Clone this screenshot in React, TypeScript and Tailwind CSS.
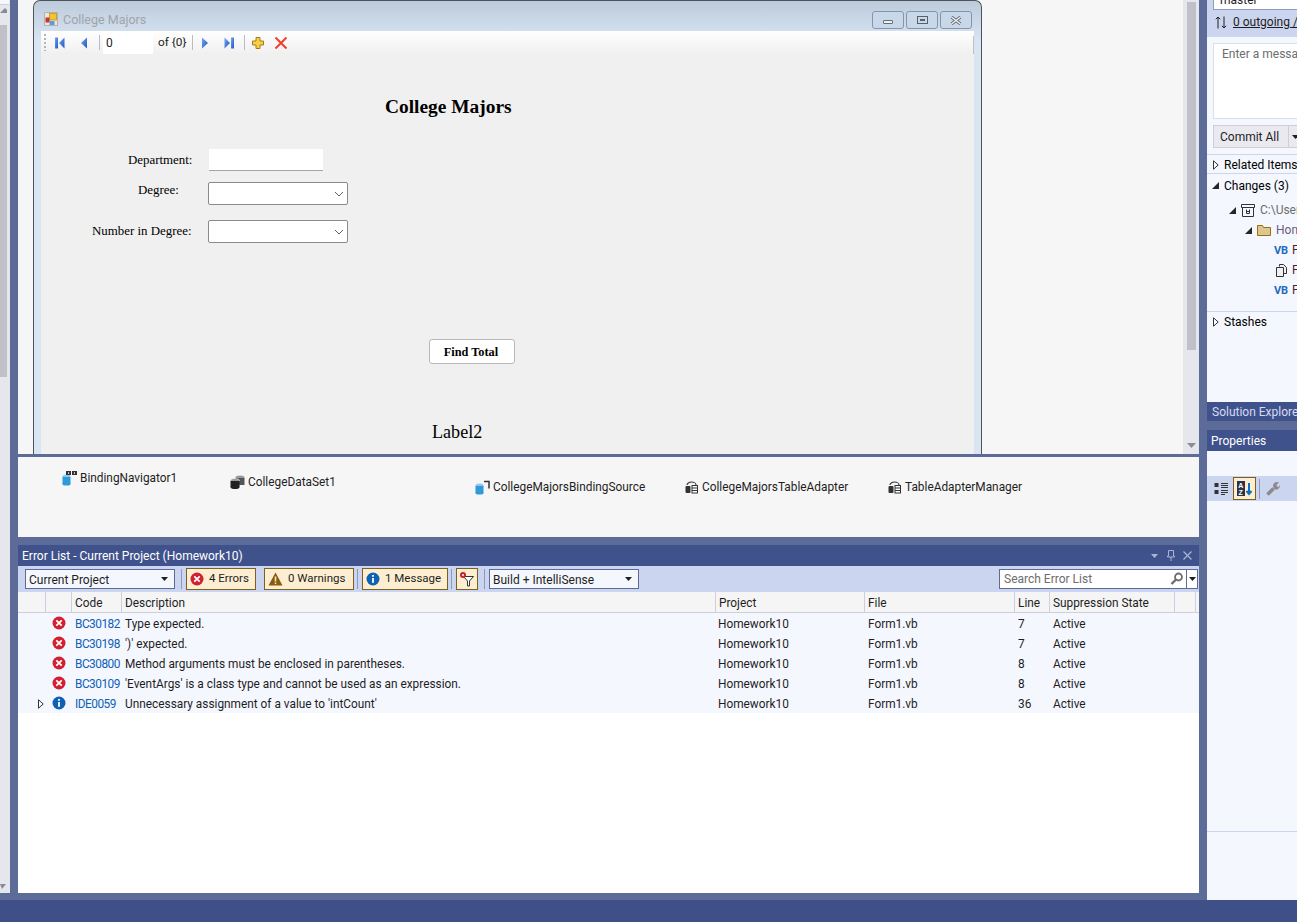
import React from "react";

const SANS = "font-['Roboto',sans-serif]";

function ErrIcon({ size = 14 }: { size?: number }) {
  return (
    <svg width={size} height={size} viewBox="0 0 14 14" className="shrink-0">
      <circle cx="7" cy="7" r="6.5" fill="#d1202f" />
      <path d="M4.3 4.3l5.4 5.4M9.700 4.300l-5.400 5.400" stroke="#fff" strokeWidth="1.800" />
    </svg>
  );
}
function InfoIcon({ size = 14 }: { size?: number }) {
  return (
    <svg width={size} height={size} viewBox="0 0 14 14" className="shrink-0">
      <circle cx="7" cy="7" r="6.500" fill="#0e61b5" />
      <rect x="6.100" y="6" width="1.800" height="4.800" fill="#fff" />
      <rect x="6.100" y="3" width="1.800" height="1.800" fill="#fff" />
    </svg>
  );
}
function WarnIcon() {
  return (
    <svg width="15" height="14" viewBox="0 0 15 14" className="shrink-0">
      <path d="M7.500 0.500L14.500 13.500H0.500Z" fill="#8a5a10" />
      <rect x="6.700" y="4.500" width="1.600" height="5" fill="#f8e8b8" />
      <rect x="6.700" y="10.500" width="1.600" height="1.600" fill="#f8e8b8" />
    </svg>
  );
}
function Caret({ className = "" }: { className?: string }) {
  return (
    <svg width="7" height="4" viewBox="0 0 7 4" className={`shrink-0 ${className}`}>
      <path d="M0 0h7L3.500 4Z" fill="#1e1e1e" />
    </svg>
  );
}
function Chevron() {
  return (
    <svg width="10" height="6" viewBox="0 0 10 6">
      <path d="M1 1l4 4 4-4" stroke="#606060" strokeWidth="1" fill="none" />
    </svg>
  );
}
function TreeOpen() {
  return (
    <svg width="7" height="7" viewBox="0 0 7 7" className="shrink-0">
      <path d="M7 0v7H0Z" fill="#262626" />
    </svg>
  );
}
function TreeClosed() {
  return (
    <svg width="6" height="10" viewBox="0 0 6 10" className="shrink-0">
      <path d="M0.500 0.800L5.200 5 0.500 9.200Z" fill="#fff" stroke="#333" strokeWidth="1" />
    </svg>
  );
}

function NavTri({ dir, bar }: { dir: "l" | "r"; bar?: boolean }) {
  return (
    <svg width="12" height="12" viewBox="0 0 12 12" className="shrink-0">
      <defs>
        <linearGradient id="navg" x1="0" y1="0" x2="1" y2="1">
          <stop offset="0" stopColor="#7aa6ee" />
          <stop offset="1" stopColor="#1d55c4" />
        </linearGradient>
      </defs>
      {dir === "l" ? (
        <>
          {bar && <rect x="1" y="0.500" width="3" height="11" fill="url(#navg)" />}
          <path d={bar ? "M10.500 0.500V11.500L5 6Z" : "M9 0.500V11.500L3 6Z"} fill="url(#navg)" />
        </>
      ) : (
        <>
          {bar && <rect x="8" y="0.500" width="3" height="11" fill="url(#navg)" />}
          <path d={bar ? "M1.500 0.500V11.500L7 6Z" : "M3 0.500V11.500L9 6Z"} fill="url(#navg)" />
        </>
      )}
    </svg>
  );
}

function ToolSep() {
  return <div className="w-px h-[15px] bg-[#b9bcc0] shrink-0" />;
}

function CapBtn({ children }: { children: React.ReactNode }) {
  return (
    <div className="w-[32px] h-[18px] rounded-[3px] border border-[#8595b0] bg-[#c9d8e8] flex items-center justify-center">
      {children}
    </div>
  );
}

function FormSelect({ className }: { className: string }) {
  return (
    <div className={`absolute w-[140px] h-[23px] bg-white border border-[#8a8a8a] rounded-[2px] flex items-center justify-end pr-[3px] ${className}`}>
      <Chevron />
    </div>
  );
}

function FormWindow() {
  return (
    <div className="ml-[15px] w-[949px] h-[454px] border border-b-0 border-[#4f5258] rounded-t-[7px] bg-gradient-to-b from-[#bccbdb] to-[#d9e5f3] to-[40px] flex flex-col">
      <div className="h-[30px] shrink-0 flex items-start">
        <div className="ml-[10px] mt-[11px] flex items-center gap-[5px]">
          <svg width="14" height="14" viewBox="0 0 14 14" className="shrink-0">
            <rect x="0.500" y="0.500" width="13" height="13" fill="#e9e6df" stroke="#b4b2aa" />
            <rect x="5.500" y="1.500" width="7" height="6.500" fill="#f4c430" stroke="#b98e10" strokeWidth="0.700" />
            <rect x="1.500" y="5.500" width="4" height="5" fill="#c8352d" />
            <rect x="5.500" y="9" width="5" height="4" fill="#5f9bdc" />
          </svg>
          <span className={`${SANS} text-[12.500px] leading-none text-[#a0a4aa] mt-[2px]`}>College Majors</span>
        </div>
        <div className="ml-auto mr-[9px] mt-[10px] flex gap-[2px]">
          <CapBtn><div className="w-[10px] h-[4px] bg-[#eef1f4] border border-[#626b78] rounded-[1px] mt-[3px]" /></CapBtn>
          <CapBtn><div className="w-[11px] h-[8px] border border-[#59606c] flex items-center justify-center"><div className="w-[5px] h-[2px] bg-[#59606c]" /></div></CapBtn>
          <CapBtn>
            <svg width="12" height="9" viewBox="0 0 12 9">
              <path d="M1.500 1l9 7M10.500 1l-9 7" stroke="#5c6470" strokeWidth="3" />
              <path d="M1.500 1l9 7M10.500 1l-9 7" stroke="#eef1f4" strokeWidth="1.400" />
            </svg>
          </CapBtn>
        </div>
      </div>
      <div className="flex-1 min-h-0 ml-[7px] mr-[7px] flex flex-col bg-[#f0f0f0]">
        <div className="h-[23px] shrink-0 bg-gradient-to-b from-white to-[#f0f0f0] flex items-center pl-[3px] relative">
          <div className="w-[2px] h-[17px] mr-[8px] shrink-0 bg-[repeating-linear-gradient(to_bottom,#b5b5b5_0,#b5b5b5_2px,transparent_2px,transparent_4px)]" />
          <NavTri dir="l" bar />
          <div className="w-[12px] shrink-0" />
          <NavTri dir="l" />
          <div className="w-[9px] shrink-0" />
          <ToolSep />
          <div className="ml-[3px] w-[50px] h-[23px] shrink-0 bg-white pl-[3px] flex items-center">
            <span className={`${SANS} text-[12px] text-[#222]`}>0</span>
          </div>
          <span className={`${SANS} ml-[5px] text-[11.800px] text-[#222] w-[30px] shrink-0 whitespace-nowrap`}>of {"{0}"}</span>
          <div className="ml-[4px]"><ToolSep /></div>
          <div className="w-[6px] shrink-0" />
          <NavTri dir="r" />
          <div className="w-[12px] shrink-0" />
          <NavTri dir="r" bar />
          <div className="w-[9px] shrink-0" />
          <ToolSep />
          <svg width="14" height="14" viewBox="0 0 14 14" className="ml-[6px] shrink-0">
            <path d="M5 1.500h4V5h3.500v4H9v3.500H5V9H1.500V5H5Z" fill="#f7cf4a" stroke="#a97c10" />
          </svg>
          <svg width="14" height="14" viewBox="0 0 14 14" className="ml-[9px] shrink-0">
            <path d="M1.500 1.500l11 11M12.500 1.500l-11 11" stroke="#f0402c" strokeWidth="2" />
          </svg>
          <div className="absolute right-0 top-[5px] w-px h-[18px] bg-[#c0c0c0]" />
        </div>
        <div className="relative flex-1 font-['Liberation_Serif',serif] text-black">
          <div className="absolute left-[344px] top-[41px] text-[19.400px] leading-[24px] font-bold whitespace-nowrap">College Majors</div>
          <div className="absolute left-[87px] top-[98px] text-[12.900px] leading-[16px] whitespace-nowrap">Department:</div>
          <div className="absolute left-[168px] top-[95px] w-[114px] h-[22px] bg-white border-b border-[#a5a5a5]" />
          <div className="absolute left-[97px] top-[128px] text-[12.900px] leading-[16px] whitespace-nowrap">Degree:</div>
          <FormSelect className="left-[167px] top-[128px]" />
          <div className="absolute left-[51px] top-[169px] text-[12.900px] leading-[16px] whitespace-nowrap">Number in Degree:</div>
          <FormSelect className="left-[167px] top-[166px]" />
          <div className="absolute left-[388px] top-[285px] w-[86px] h-[25px] bg-white border border-[#b8b8b8] rounded-[3px] flex items-center justify-center text-[12.300px] font-bold pr-[2px] pt-px">Find Total</div>
          <div className="absolute left-[391px] top-[367px] text-[18.100px] leading-[22px] whitespace-nowrap">Label2</div>
        </div>
      </div>
    </div>
  );
}

function Cylinder({ fill = "#2f9ad9" }: { fill?: string }) {
  return (
    <>
      <ellipse cx="4.500" cy="5.500" rx="4" ry="2" fill="#8cc8ee" />
      <rect x=".5" y="6" width="8" height="7" fill={fill} />
      <ellipse cx="4.500" cy="13" rx="4" ry="1.500" fill={fill} />
    </>
  );
}

function TrayItem({ className, label, icon }: { className: string; label: string; icon: React.ReactNode }) {
  return (
    <div className={`absolute flex items-center gap-[3px] ${className}`}>
      {icon}
      <span className={`${SANS} text-[11.850px] leading-[16px] text-[#1e1e1e] whitespace-nowrap`}>{label}</span>
    </div>
  );
}

const adapterIcon = (
  <svg width="13" height="13" viewBox="0 0 13 13" className="shrink-0">
    <path d="M2 4a4.500 3 0 0 1 9 0" stroke="#333" strokeWidth="1.200" fill="none" />
    <rect x="0.500" y="5" width="5" height="7" rx="1" fill="#333" />
    <rect x="7" y="4.500" width="5.500" height="7.500" fill="#fff" stroke="#333" />
    <path d="M7 7h5.500M7 9.500h5.500" stroke="#333" />
  </svg>
);

function Tray() {
  return (
    <div className="relative h-[80px] shrink-0 bg-[#f6f6f6]">
      <TrayItem
        className="left-[44px] top-[13px]"
        label="BindingNavigator1"
        icon={
          <svg width="15" height="15" viewBox="0 0 15 15" className="shrink-0">
            <Cylinder />
            <rect x="4" y="0" width="5" height="4" fill="#333" />
            <rect x="10" y="0" width="5" height="4" fill="#333" />
            <path d="M6 1v2l1.500-1ZM13 1v2l-1.500-1Z" fill="#fff" />
          </svg>
        }
      />
      <TrayItem
        className="left-[212px] top-[17px]"
        label="CollegeDataSet1"
        icon={
          <svg width="15" height="14" viewBox="0 0 15 14" className="shrink-0">
            <ellipse cx="10" cy="2.500" rx="4.500" ry="2" fill="#999" />
            <rect x="5.500" y="3" width="9" height="7" fill="#555" />
            <ellipse cx="5" cy="5.500" rx="4.500" ry="2" fill="#999" stroke="#f6f6f6" strokeWidth="0.500" />
            <rect x="0.500" y="6" width="9" height="6" fill="#222" />
            <ellipse cx="5" cy="12" rx="4.500" ry="2" fill="#222" />
          </svg>
        }
      />
      <TrayItem
        className="left-[457px] top-[22px]"
        label="CollegeMajorsBindingSource"
        icon={
          <svg width="15" height="15" viewBox="0 0 15 15" className="shrink-0">
            <Cylinder />
            <path d="M9 1.500h5v7" stroke="#333" strokeWidth="1.500" fill="none" />
          </svg>
        }
      />
      <TrayItem className="left-[667px] top-[22px] !gap-[4px]" label="CollegeMajorsTableAdapter" icon={adapterIcon} />
      <TrayItem className="left-[870px] top-[22px] !gap-[4px]" label="TableAdapterManager" icon={adapterIcon} />
    </div>
  );
}

function BarSep() {
  return <div className="w-px h-[20px] bg-[#8f9bbd] shrink-0" />;
}

function CountBtn({ className, icon, label }: { className: string; icon: React.ReactNode; label: string }) {
  return (
    <div className={`h-[22px] shrink-0 bg-[#fdeed2] border border-[#7c6020] flex items-center gap-[5px] pl-[3px] ${className}`}>
      {icon}
      <span className={`${SANS} text-[11.500px] leading-none text-[#1e1e1e] whitespace-nowrap`}>{label}</span>
    </div>
  );
}

function ToolCombo({ className, label }: { className: string; label: string }) {
  return (
    <div className={`h-[20px] shrink-0 bg-[#f5f7fe] border border-[#5d6b99] flex items-center pl-[3px] pr-[6px] ${className}`}>
      <span className={`${SANS} text-[12px] leading-none text-[#1e1e1e] whitespace-nowrap pt-px`}>{label}</span>
      <Caret className="ml-auto" />
    </div>
  );
}

const COLS = "grid-cols-[28px_26px_50px_594px_149px_150px_35px_125px_21px]";

const HEADERS = ["", "", "Code", "Description", "Project", "File", "Line", "Suppression State", ""];

type Row = { kind: "e" | "i"; code: string; desc: string; line: string };
const ROWS: Row[] = [
  { kind: "e", code: "BC30182", desc: "Type expected.", line: "7" },
  { kind: "e", code: "BC30198", desc: "')' expected.", line: "7" },
  { kind: "e", code: "BC30800", desc: "Method arguments must be enclosed in parentheses.", line: "8" },
  { kind: "e", code: "BC30109", desc: "'EventArgs' is a class type and cannot be used as an expression.", line: "8" },
  { kind: "i", code: "IDE0059", desc: "Unnecessary assignment of a value to 'intCount'", line: "36" },
];

function ErrorList() {
  const t = `${SANS} text-[11.850px] text-[#1e1e1e] whitespace-nowrap`;
  return (
    <div className="h-[348px] shrink-0 flex flex-col bg-white">
      <div className="h-[21px] shrink-0 bg-[#40528c] flex items-center pl-[4px] pr-[7px]">
        <span className={`${SANS} text-[12px] leading-none text-white`}>Error List - Current Project (Homework10)</span>
        <div className="ml-auto flex items-center gap-[8px]">
          <svg width="7" height="4" viewBox="0 0 7 4" className="mr-[1px]"><path d="M0 0h7L3.500 4Z" fill="#aab5d6" /></svg>
          <svg width="8" height="11" viewBox="0 0 8 11">
            <path d="M1.500 0.500h5V6H7.500v1H.5V6h1ZM4 7v4" stroke="#aab5d6" fill="none" />
          </svg>
          <svg width="9" height="9" viewBox="0 0 9 9"><path d="M0.500 0.500l8 8M8.500 0.500l-8 8" stroke="#aab5d6" strokeWidth="1.200" /></svg>
        </div>
      </div>
      <div className="h-[26px] shrink-0 bg-[#ccd5f0] flex items-center pl-[7px] pr-[1px]">
        <ToolCombo className="w-[150px]" label="Current Project" />
        <div className="w-[6px] shrink-0" />
        <BarSep />
        <div className="w-[4px] shrink-0" />
        <CountBtn className="w-[70px]" icon={<ErrIcon />} label="4 Errors" />
        <div className="w-[8px] shrink-0" />
        <CountBtn className="w-[90px]" icon={<WarnIcon />} label="0 Warnings" />
        <div className="w-[3px] shrink-0" />
        <BarSep />
        <div className="w-[4px] shrink-0" />
        <CountBtn className="w-[86px]" icon={<InfoIcon />} label="1 Message" />
        <div className="w-[3px] shrink-0" />
        <BarSep />
        <div className="w-[4px] shrink-0" />
        <div className="w-[22px] h-[22px] shrink-0 bg-[#fdeed2] border border-[#7c6020] flex items-center justify-center">
          <svg width="16" height="16" viewBox="0 0 16 16">
            <path d="M4.500 5.500h10L10.500 10v5h-2v-5Z" fill="#fff" stroke="#333" />
            <circle cx="4" cy="4" r="3" fill="#c8202c" />
            <circle cx="4" cy="4" r="1" fill="#fff" />
          </svg>
        </div>
        <div className="w-[6px] shrink-0" />
        <BarSep />
        <div className="w-[4px] shrink-0" />
        <ToolCombo className="w-[150px]" label="Build + IntelliSense" />
        <div className="ml-auto flex items-stretch h-[20px] bg-white border border-[#5d6b99] w-[199px]">
          <span className={`${SANS} flex-1 text-[12px] leading-[18px] pl-[4px] text-[#6d6d6d]`}>Search Error List</span>
          <svg width="14" height="14" viewBox="0 0 14 14" className="self-center mr-[2px]">
            <circle cx="8.500" cy="5" r="3.500" fill="none" stroke="#6d6d6d" strokeWidth="1.800" />
            <path d="M6 7.500L1.500 12" stroke="#6d6d6d" strokeWidth="2.400" />
          </svg>
          <div className="w-[11px] border-l border-[#5d6b99] flex items-center justify-center">
            <Caret />
          </div>
        </div>
      </div>
      <div className={`grid ${COLS} h-[21px] shrink-0 bg-[#f5f5f5] border-b border-[#ccd0de]`}>
        {HEADERS.map((h, i) => (
          <div key={i} className={`${t} border-r border-[#ccd0de] pl-[3px] leading-[23px] overflow-hidden`}>{h}</div>
        ))}
      </div>
      <div className="bg-[#f5f7fe]">
        {ROWS.map((r) => (
          <div key={r.code} className={`grid ${COLS} h-[20px] items-center ${t} leading-[20px] pt-px`}>
            <div className="flex justify-end pr-[2px]">{r.kind === "i" && <TreeClosed />}</div>
            <div className="flex pl-[6px] mt-[-2px]">{r.kind === "e" ? <ErrIcon /> : <InfoIcon />}</div>
            <div className="pl-[3px] text-[#0e61b5] tracking-[-0.500px]">{r.code}</div>
            <div className="pl-[3px]">{r.desc}</div>
            <div className="pl-[2px]">Homework10</div>
            <div className="pl-[3px]">Form1.vb</div>
            <div className="pl-[3px]">{r.line}</div>
            <div className="pl-[3px]">Active</div>
            <div />
          </div>
        ))}
      </div>
    </div>
  );
}

function FileRow({ icon, label }: { icon: React.ReactNode; label: string }) {
  return (
    <div className="h-[20px] pl-[66px] flex items-center gap-[3px]">
      <div className="w-[16px] flex justify-center shrink-0">{icon}</div>
      <span className="text-[#4a1e2a]">{label}</span>
    </div>
  );
}

const vb = <span className="text-[11px] font-bold text-[#1a6bc0] leading-none">VB</span>;

function RightPanel() {
  const t = `${SANS} text-[12px] whitespace-nowrap text-[#1e1e1e]`;
  return (
    <div className={`w-[90px] shrink-0 overflow-hidden bg-[#f5f7fe] flex flex-col ${t}`}>
      <div className="h-[37px] shrink-0 bg-[#ccd5f0] pl-[6px] relative overflow-hidden">
        <div className="absolute left-[6px] top-[-10px] w-[100px] h-[20px] bg-white border border-[#8f9bbd] pl-[6px] leading-[18px]">master</div>
        <div className="absolute left-[8px] top-[14px] flex items-center gap-[6px]">
          <svg width="12" height="13" viewBox="0 0 12 13" className="shrink-0">
            <path d="M3 12.500V1M.8 3.200L3 1l2.200 2.200M9 .5V12M6.800 9.800L9 12l2.200-2.200" stroke="#1e1e1e" fill="none" />
          </svg>
          <span className="underline leading-[16px]">0 outgoing /</span>
        </div>
      </div>
      <div className="pt-[6px] px-[6px] shrink-0">
        <div className="w-[100px] h-[76px] bg-white border border-[#dcdfe8] pl-[8px] pt-[1px] text-[#6d6d6d]">Enter a message</div>
      </div>
      <div className="mt-[6px] ml-[6px] h-[23px] w-[100px] shrink-0 flex bg-[#e9e9ef] border border-[#ccced8] text-[#1e1e1e]">
        <span className="pl-[6px] w-[74px] leading-[23px]">Commit All</span>
        <div className="w-px bg-[#ccced8]" />
        <Caret className="ml-[3px] mt-[9px]" />
      </div>
      <div className="mt-[6px] h-[19px] shrink-0 border-t border-[#ccd5f0] flex items-center pl-[6px] gap-[5px] pt-px">
        <TreeClosed />
        <span className="text-black">Related Items</span>
      </div>
      <div className="h-[21px] shrink-0 border-t border-[#ccd5f0] flex items-center pl-[5px] gap-[5px] pt-[3px]">
        <TreeOpen />
        <span className="text-black">Changes (3)</span>
      </div>
      <div className="pt-[6px] shrink-0 h-[118px] border-b border-[#ccd5f0]">
        <div className="h-[20px] pl-[22px] flex items-center gap-[5px]">
          <TreeOpen />
          <svg width="14" height="13" viewBox="0 0 14 13" className="shrink-0">
            <path d="M.5 .5h13v3H.5ZM1.500 3.500v9h11v-9M5.500 5.500v4h3v-4M5.500 7.500h3" stroke="#333" fill="none" />
          </svg>
          <span className="text-[#6d6d6d]">C:\Users</span>
        </div>
        <div className="h-[20px] pl-[38px] flex items-center gap-[5px]">
          <TreeOpen />
          <svg width="14" height="11" viewBox="0 0 14 11" className="shrink-0">
            <path d="M.5 10.500V.5h5l1 2h7v8Z" fill="#dcc88f" stroke="#996f10" />
          </svg>
          <span className="text-[#6b5a7a]">Homework10</span>
        </div>
        <FileRow icon={vb} label="Form1.vb" />
        <FileRow
          icon={
            <svg width="11" height="13" viewBox="0 0 11 13" className="shrink-0">
              <path d="M3.500 2.500V.5h4l3 3v6h-3M.5 3.500h7v9h-7Z" fill="#f0f0f0" stroke="#333" />
            </svg>
          }
          label="Form1.resx"
        />
        <FileRow icon={vb} label="Form1.Designer.vb" />
      </div>
      <div className="h-[20px] shrink-0 flex items-center pl-[6px] gap-[5px]">
        <TreeClosed />
        <span className="text-black">Stashes</span>
      </div>
      <div className="flex-1 min-h-0 flex flex-col">
        <div className="h-[70px] shrink-0" />
        <div className="h-[19px] shrink-0 bg-[#40528c] text-[#d5dcf2] pl-[5px] leading-[20px]">Solution Explorer</div>
        <div className="h-[9px] shrink-0 bg-[#5d6b99]" />
        <div className="h-[21px] shrink-0 bg-[#40528c] text-white pl-[4px] leading-[22px]">Properties</div>
        <div className="h-[25px] shrink-0" />
        <div className="h-[25px] shrink-0 bg-[#ccd5f0] flex items-center pl-[2px]">
          <div className="w-[24px] flex justify-center shrink-0">
            <svg width="15" height="14" viewBox="0 0 15 14">
              <rect x=".5" y="1" width="4" height="4" fill="#333" />
              <rect x=".5" y="8" width="4" height="4" fill="#333" />
              <path d="M7 1.500h7M7 3.500h7M7 5.500h7M7 8.500h7M7 10.500h7M7 12.500h4" stroke="#333" />
            </svg>
          </div>
          <div className="w-[23px] h-[23px] shrink-0 bg-[#fdeed2] border border-[#7c6020] flex items-center justify-center">
            <svg width="17" height="17" viewBox="0 0 17 17">
              <rect x="1" y="1" width="8" height="15" fill="#2c3447" />
              <text x="2.300" y="7.500" fontSize="7" fontWeight="700" fill="#fff" fontFamily="Liberation Sans">A</text>
              <text x="2.500" y="14.500" fontSize="7" fontWeight="700" fill="#fff" fontFamily="Liberation Sans">Z</text>
              <path d="M13 3v11M10.500 11l2.500 3 2.500-3" stroke="#0e70c0" strokeWidth="2" fill="none" />
            </svg>
          </div>
          <div className="ml-[3px] w-px h-[20px] shrink-0 bg-[#8f9bbd]" />
          <svg width="16" height="16" viewBox="0 0 16 16" className="ml-[5px] shrink-0">
            <path d="M2.500 13.500L8.500 7.500" stroke="#8a8a8a" strokeWidth="3.500" />
            <path d="M8 5a4 4 0 0 1 6-3.500L11.500 4l.5 1.500 1.500.5L15 4a4 4 0 0 1-6 4Z" fill="#8a8a8a" />
          </svg>
        </div>
        <div className="h-[331px] shrink-0 border-b border-[#ccd5f0]" />
        <div className="flex-1" />
      </div>
    </div>
  );
}

export default function App() {
  return (
    <div className="w-[1297px] h-[922px] overflow-hidden bg-[#5d6b99] flex flex-col">
      <div className="h-[900px] shrink-0 flex">
        <div className="w-[10px] shrink-0 h-[893px] mt-0 bg-[#e6e7ed] flex flex-col items-start">
          <div className="h-[5px] w-[9px] bg-[#f5f7fe] shrink-0 border-b border-[#ccd0de]" />
          <div className="h-[20px] shrink-0 pt-[3px]">
            <svg width="7" height="5" viewBox="0 0 7 5"><path d="M0 5L5 0l2 2v3Z" fill="#8a8c94" /></svg>
          </div>
          <div className="w-[7px] h-[352px] bg-[#c0c1c8] shrink-0" />
          <div className="flex-1" />
          <svg width="7" height="6" viewBox="0 0 7 6" className="mb-[3px]"><path d="M0 0h6L2 5Z" fill="#8a8c94" /></svg>
        </div>
        <div className="w-[8px] shrink-0" />
        <div className="w-[1181px] shrink-0 flex flex-col">
          <div className="h-[454px] shrink-0 flex bg-[#f6f6f6]">
            <div className="flex-1 min-w-0">
              <FormWindow />
            </div>
            <div className="w-[16px] shrink-0 bg-[#e6e7ed] flex flex-col items-center">
              <div className="mt-[2px] w-[9px] h-[348px] bg-[#c0c1c8]" />
              <div className="flex-1" />
              <svg width="9" height="5" viewBox="0 0 9 5" className="mb-[6px]"><path d="M0 0h9L4.500 5Z" fill="#8a8c94" /></svg>
            </div>
          </div>
          <div className="h-[3px] shrink-0" />
          <Tray />
          <div className="h-[8px] shrink-0" />
          <ErrorList />
        </div>
        <div className="w-[8px] shrink-0" />
        <RightPanel />
      </div>
      <div className="h-[22px] shrink-0 bg-[#3f5089]" />
    </div>
  );
}
